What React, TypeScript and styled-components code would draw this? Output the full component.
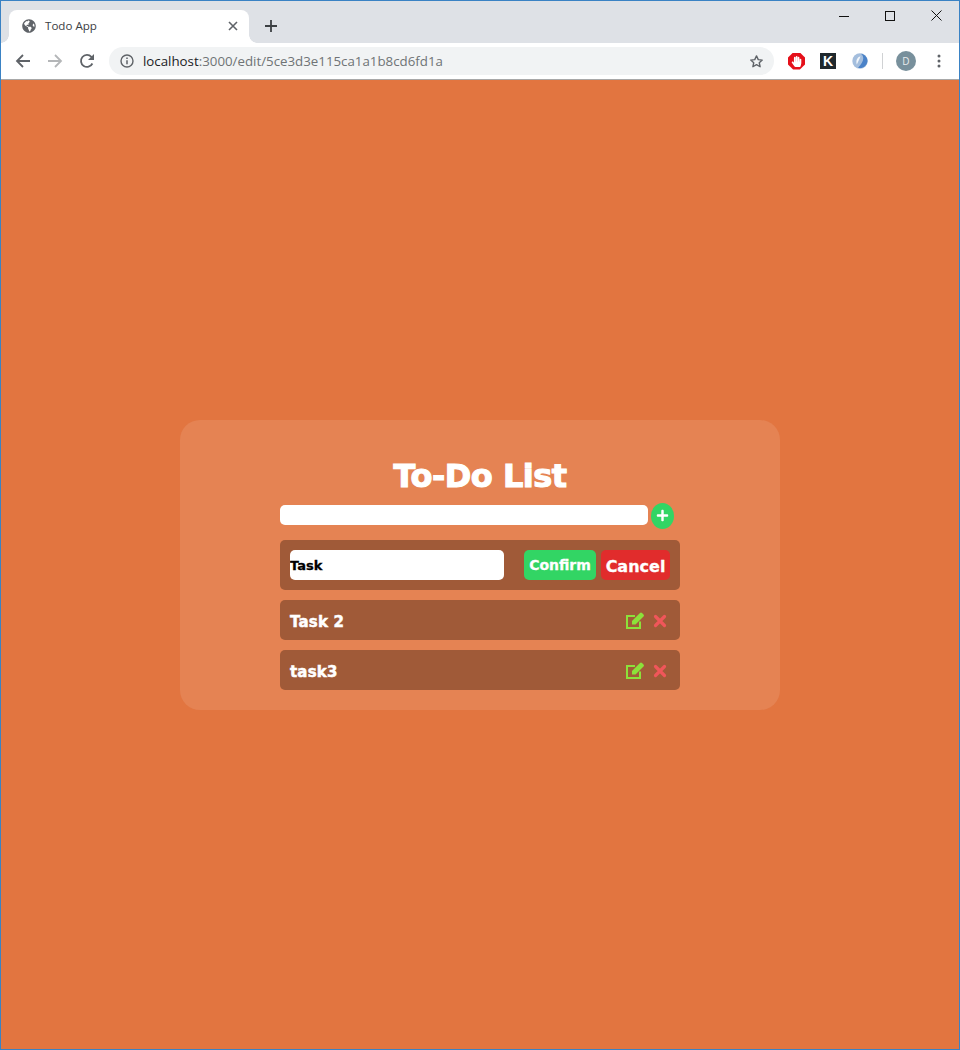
import React from "react";
import styled, { createGlobalStyle } from "styled-components";
import { FaGlobeAmericas, FaHandPaper, FaPlus } from "react-icons/fa";

const GlobalStyle = createGlobalStyle`
  html, body {
    margin: 0;
    padding: 0;
  }
  * {
    box-sizing: border-box;
  }
`;

const Window = styled.div`
  width: 960px;
  height: 1050px;
  display: flex;
  flex-direction: column;
  border: 1px solid #3a82c4;
  background: #e27540;
  overflow: hidden;
`;

const TabStrip = styled.div`
  height: 42px;
  flex: none;
  display: flex;
  align-items: flex-end;
  padding-left: 8px;
  background: #dee1e6;
`;

const Tab = styled.div`
  position: relative;
  width: 240px;
  height: 33px;
  display: flex;
  align-items: center;
  padding: 0 11px 2px 13px;
  background: #fff;
  border-radius: 8px 8px 0 0;
  font: 11.6px "Open Sans", sans-serif;
  color: #3c4043;
  &::before,
  &::after {
    content: "";
    position: absolute;
    bottom: 0;
    width: 8px;
    height: 8px;
    background: radial-gradient(circle at var(--cx) 0, #dee1e6 7.5px, #fff 8px);
  }
  &::before {
    --cx: 0;
    left: -8px;
  }
  &::after {
    --cx: 100%;
    right: -8px;
  }
`;

const TabTitle = styled.span`
  flex: 1;
  margin-left: 9px;
`;

const NewTab = styled.div`
  margin: 0 0 5px 13px;
  width: 18px;
  height: 24px;
  display: flex;
  align-items: center;
  justify-content: center;
  color: #3c4043;
`;

const WindowControls = styled.div`
  margin-left: auto;
  align-self: flex-start;
  display: flex;
  height: 29px;
  color: #111;
`;

const WindowButton = styled.div`
  width: 46px;
  height: 29px;
  display: flex;
  align-items: center;
  justify-content: center;
`;

const Toolbar = styled.div`
  height: 37px;
  flex: none;
  display: flex;
  align-items: center;
  padding: 0 7px 0 14px;
  background: #fff;
  border-bottom: 1px solid #a8a8a8;
`;

const NavButton = styled.div`
  width: 32px;
  height: 28px;
  display: flex;
  align-items: center;
  color: #5f6368;
`;

const Omnibox = styled.div`
  width: 665px;
  height: 28px;
  margin-left: -2px;
  padding: 0 10px 0 11px;
  display: flex;
  align-items: center;
  background: #f1f3f4;
  border-radius: 14px;
  font: 13.3px "Open Sans", sans-serif;
  color: #6f7376;
`;

const UrlText = styled.span`
  flex: 1;
  margin-left: 9px;
`;

const UrlHost = styled.span`
  color: #202124;
`;

const Extensions = styled.div`
  flex: 1;
  display: flex;
  align-items: center;
  padding-left: 14px;
`;

const ExtensionSlot = styled.div`
  width: 32px;
  height: 20px;
  display: flex;
  align-items: center;
`;

const BlockerBadge = styled.div`
  width: 17px;
  height: 17px;
  display: flex;
  align-items: center;
  justify-content: center;
  background: #e5101a;
  clip-path: polygon(30% 0, 70% 0, 100% 30%, 100% 70%, 70% 100%, 30% 100%, 0 70%, 0 30%);
  color: #fff;
`;

const KTile = styled.div`
  width: 16px;
  height: 16px;
  display: flex;
  align-items: center;
  justify-content: center;
  background: #1f282d;
  color: #fff;
  font: 700 14px "Liberation Sans", sans-serif;
`;

const Separator = styled.div`
  width: 1px;
  height: 16px;
  margin: 0 13px 0 -2px;
  background: #d0d2d4;
`;

const Avatar = styled.div`
  width: 20px;
  height: 20px;
  margin-right: 21px;
  display: flex;
  align-items: center;
  justify-content: center;
  border-radius: 50%;
  background: #78909c;
  color: #e8ecee;
  font: 10px "Open Sans", sans-serif;
`;

const Viewport = styled.main`
  flex: 1;
  display: flex;
  align-items: center;
  justify-content: center;
  background: #e27540;
`;

const Card = styled.section`
  width: 600px;
  padding: 37px 100px 20px;
  display: flex;
  flex-direction: column;
  background: rgba(255, 255, 255, 0.1);
  border-radius: 20px;
  font-family: "DejaVu Sans", sans-serif;
  font-weight: 700;
`;

const Title = styled.h1`
  margin: 0 0 8px;
  height: 38px;
  text-align: center;
  font: 700 32px/38px "DejaVu Sans", sans-serif;
  color: #fff;
  -webkit-text-stroke: 1.1px #fff;
  letter-spacing: -0.5px;
`;

const AddRow = styled.div`
  display: flex;
  align-items: flex-start;
  margin-bottom: 11px;
`;

const TextField = styled.input<{ $w: number; $h: number; $top?: number }>`
  width: ${(p) => p.$w}px;
  height: ${(p) => p.$h}px;
  margin-top: ${(p) => p.$top ?? 0}px;
  padding: 2px 0 0;
  border: none;
  outline: none;
  border-radius: 5px;
  background: #fff;
  color: #000;
  font: 700 13px "DejaVu Sans", sans-serif;
  -webkit-text-stroke: 0.3px #000;
`;

const AddButton = styled.div`
  width: 23px;
  height: 26px;
  margin-left: 3px;
  display: flex;
  align-items: center;
  justify-content: center;
  border-radius: 50%;
  background: #32d564;
  color: #fff;
`;

const TaskList = styled.div`
  display: flex;
  flex-direction: column;
  gap: 10px;
`;

const TaskRow = styled.div<{ $tall?: boolean }>`
  height: ${(p) => (p.$tall ? 50 : 40)}px;
  padding: 0 13px 0 10px;
  display: flex;
  align-items: center;
  background: #a05a38;
  border-radius: 5px;
  color: #fff;
  font-size: 15px;
`;

const TaskName = styled.span`
  flex: 1;
  padding-top: 4px;
  -webkit-text-stroke: 0.5px #fff;
  letter-spacing: 0.2px;
`;

const EditForm = styled.div`
  flex: 1;
  display: flex;
  align-items: center;
`;

const FormButton = styled.div<{ $bg: string; $w: number; $size: number; $top?: number }>`
  width: ${(p) => p.$w}px;
  height: 30px;
  padding-top: ${(p) => p.$top ?? 0}px;
  display: flex;
  align-items: center;
  justify-content: center;
  background: ${(p) => p.$bg};
  border-radius: 5px;
  color: #fff;
  font-size: ${(p) => p.$size}px;
  -webkit-text-stroke: 0.3px #fff;
`;

const ConfirmSlot = styled.div`
  margin: 0 5px 0 20px;
`;

const CancelSlot = styled.div`
  margin-right: -3px;
`;

const RowIcon = styled.svg`
  flex: none;
  margin-top: 2px;
`;

const DeleteMark = styled(RowIcon)`
  margin-left: 9px;
`;

function EditIcon() {
  return (
    <RowIcon width="18" height="17" viewBox="0 0 18 17">
      <path d="M9 4H1v12h13V9.5" fill="none" stroke="#8ce03a" strokeWidth="2" />
      <path
        d="M6 12.5V9l8-8a1.5 1.5 0 0 1 2 0l1.5 1.5a1.5 1.5 0 0 1 0 2l-8 8z"
        fill="#8ce03a"
      />
    </RowIcon>
  );
}

function DeleteIcon() {
  return (
    <DeleteMark width="14" height="14" viewBox="0 0 14 14">
      <path d="M2.5 2.5l9 9M11.5 2.5l-9 9" stroke="#f0565a" strokeWidth="3.2" strokeLinecap="round" />
    </DeleteMark>
  );
}

function TaskItem({ name }: { name: string }) {
  return (
    <TaskRow>
      <TaskName>{name}</TaskName>
      <EditIcon />
      <DeleteIcon />
    </TaskRow>
  );
}

export default function App() {
  return (
    <Window>
      <GlobalStyle />
      <TabStrip>
        <Tab>
          <FaGlobeAmericas size={14} color="#5f6368" />
          <TabTitle>Todo App</TabTitle>
          <svg width="10" height="10" viewBox="0 0 10 10">
            <path d="M1 1l8 8M9 1l-8 8" stroke="#5f6368" strokeWidth="1.6" />
          </svg>
        </Tab>
        <NewTab>
          <svg width="12" height="12" viewBox="0 0 12 12">
            <path d="M6 0v12M0 6h12" stroke="#3c4043" strokeWidth="1.8" />
          </svg>
        </NewTab>
        <WindowControls>
          <WindowButton>
            <svg width="10" height="10" viewBox="0 0 10 10">
              <path d="M0 5.5h10" stroke="#111" />
            </svg>
          </WindowButton>
          <WindowButton>
            <svg width="10" height="10" viewBox="0 0 10 10">
              <rect x=".5" y=".5" width="9" height="9" fill="none" stroke="#111" />
            </svg>
          </WindowButton>
          <WindowButton>
            <svg width="11" height="11" viewBox="0 0 11 11">
              <path d="M.5.5l10 10M10.5.5l-10 10" stroke="#111" />
            </svg>
          </WindowButton>
        </WindowControls>
      </TabStrip>
      <Toolbar>
        <NavButton>
          <svg width="16" height="16" viewBox="0 0 16 16">
            <path d="M15 8H2M8 2L2 8l6 6" fill="none" stroke="#5f6368" strokeWidth="1.8" />
          </svg>
        </NavButton>
        <NavButton>
          <svg width="16" height="16" viewBox="0 0 16 16">
            <path d="M1 8h13M8 2l6 6-6 6" fill="none" stroke="#b4b6b8" strokeWidth="1.8" />
          </svg>
        </NavButton>
        <NavButton>
          <svg width="16" height="16" viewBox="0 0 16 16">
            <path d="M13.4 10.5A6 6 0 1 1 12.4 3.8L14.5 6" fill="none" stroke="#5f6368" strokeWidth="1.8" />
            <path d="M15 1v6H9z" fill="#5f6368" />
          </svg>
        </NavButton>
        <Omnibox>
          <svg width="14" height="14" viewBox="0 0 14 14">
            <circle cx="7" cy="7" r="6" fill="none" stroke="#5f6368" strokeWidth="1.4" />
            <path d="M7 6.2v4M7 3.6v1.5" stroke="#5f6368" strokeWidth="1.5" />
          </svg>
          <UrlText>
            <UrlHost>localhost</UrlHost>:3000/edit/5ce3d3e115ca1a1b8cd6fd1a
          </UrlText>
          <svg width="15" height="15" viewBox="0 0 24 24">
            <path
              d="M12 3l2.8 6 6.4.7-4.8 4.3 1.4 6.4L12 17.1l-5.8 3.3 1.4-6.4-4.8-4.3 6.4-.7z"
              fill="none"
              stroke="#5f6368"
              strokeWidth="2.2"
              strokeLinejoin="round"
            />
          </svg>
        </Omnibox>
        <Extensions>
          <ExtensionSlot>
            <BlockerBadge>
              <FaHandPaper size={11} />
            </BlockerBadge>
          </ExtensionSlot>
          <ExtensionSlot>
            <KTile>K</KTile>
          </ExtensionSlot>
          <ExtensionSlot>
            <svg width="16" height="16" viewBox="0 0 16 16">
              <circle cx="8" cy="8" r="7.7" fill="#a4bedd" />
              <path d="M9 .8C13 4 11.5 9 6 14.8c4.5 1.3 8.7-1.6 9.4-6C16 5 13 1.5 9 .8z" fill="#4a82c8" />
              <path d="M8.5 3.2C5.2 4 3.6 7.4 4.8 11.6 6 8.6 7.8 6 8.5 3.2z" fill="#f2f6fb" />
            </svg>
          </ExtensionSlot>
          <Separator />
          <Avatar>D</Avatar>
          <svg width="4" height="14" viewBox="0 0 4 14">
            <circle cx="2" cy="2" r="1.5" fill="#5f6368" />
            <circle cx="2" cy="7" r="1.5" fill="#5f6368" />
            <circle cx="2" cy="12" r="1.5" fill="#5f6368" />
          </svg>
        </Extensions>
      </Toolbar>
      <Viewport>
        <Card>
          <Title>To-Do List</Title>
          <AddRow>
            <TextField $w={368} $h={20} $top={2} readOnly />
            <AddButton>
              <FaPlus size={13} />
            </AddButton>
          </AddRow>
          <TaskList>
            <TaskRow $tall>
              <EditForm>
                <TextField $w={214} $h={30} readOnly value="Task" />
                <ConfirmSlot>
                  <FormButton $bg="#32d564" $w={72} $size={14}>
                    Confirm
                  </FormButton>
                </ConfirmSlot>
                <CancelSlot>
                  <FormButton $bg="#e12c2c" $w={69} $size={16} $top={3}>
                    Cancel
                  </FormButton>
                </CancelSlot>
              </EditForm>
            </TaskRow>
            <TaskItem name="Task 2" />
            <TaskItem name="task3" />
          </TaskList>
        </Card>
      </Viewport>
    </Window>
  );
}
